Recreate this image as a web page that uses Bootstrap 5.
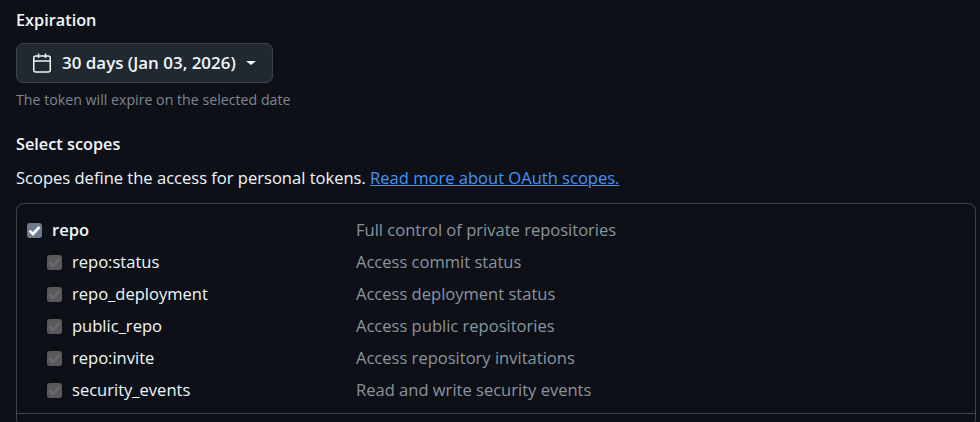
<!DOCTYPE html>
<html lang="en" data-bs-theme="dark">
<head>
<meta charset="utf-8">
<title>Expiration and scopes</title>
<link rel="stylesheet" href="https://cdn.jsdelivr.net/npm/bootstrap@5.3.0/dist/css/bootstrap.min.css">
<style>
html, body { height: 422px; overflow: hidden; }
body { background: #0d1117; color: #f0f6fc; font-family: "Open Sans", "Noto Sans", sans-serif; font-size: 16.55px; line-height: 24px; }
.page-wrap { padding: 8px 4px 0 16px; }
.field-title { font-weight: 600; font-size: 16.3px; line-height: 24px; margin: 0; color: #f0f6fc; }
.expire-btn { height: 40px; margin-top: 11px; padding: 0 16px; background: #212830; border: 1px solid #3d444d; border-radius: 7px; color: #f0f6fc; font-weight: 600; font-size: 16.95px; line-height: 24px; }
.expire-btn:hover, .expire-btn:focus { background: #212830; color: #f0f6fc; border-color: #3d444d; }
.btn-glyph { margin-right: 11px; flex: none; }
.caret-mark { display: inline-block; width: 0; height: 0; margin-left: 10px; border-top: 4px solid #f0f6fc; border-left: 5px solid transparent; border-right: 5px solid transparent; }
.hint-text { font-size: 14.2px; line-height: 20px; color: #7d8590; margin-top: 7px; }
.scope-head { margin-top: 22px; }
.scope-intro { margin: 10px 0 0; line-height: 24px; color: #f0f6fc; }
.scope-intro a { color: #4493f8; }
.scope-box { margin-top: 13px; border: 1px solid #3d444d; border-radius: 8px; padding: 10px 0 0; height: 224px; }
.scope-row { height: 32px; padding-left: 10px; }
.scope-row.sub-row { padding-left: 30px; }
.scope-name { width: 304px; flex: none; }
.scope-row.sub-row .scope-name { width: 284px; }
.scope-desc { color: #8b949e; }
.scope-check[type=checkbox].form-check-input { width: 15px; height: 15px; margin: 0 10px 0 0; flex: none; border-radius: 3px; border: 0; opacity: 1; background-size: 15px 15px; }
.scope-check[type=checkbox].form-check-input:checked { background-color: #6e7b8f; --bs-form-check-bg-image: url("data:image/svg+xml,%3csvg xmlns='http://www.w3.org/2000/svg' viewBox='0 0 15 15'%3e%3cpath fill='none' stroke='%23fff' stroke-width='2.6' d='M2.6 7.6l3.4 3.4 6.4-7'/%3e%3c/svg%3e"); }
.scope-check[type=checkbox].form-check-input:disabled { background-color: #5a5a5a; opacity: 1; --bs-form-check-bg-image: url("data:image/svg+xml,%3csvg xmlns='http://www.w3.org/2000/svg' viewBox='0 0 15 15'%3e%3cpath fill='none' stroke='%236c6c6c' stroke-width='2.4' d='M2.6 7.6l3.4 3.4 6.4-7'/%3e%3c/svg%3e"); }
.scope-rule { border-top: 1px solid #3d444d; margin-top: 7px; }
</style>
</head>
<body>
<div class="page-wrap">
  <p class="field-title">Expiration</p>
  <button type="button" class="btn expire-btn d-inline-flex align-items-center">
    <svg class="btn-glyph" width="18" height="20" viewBox="0 0 18 20" fill="none" stroke="#f0f6fc" stroke-width="1.5" aria-hidden="true"><rect x=".75" y="3" width="16.5" height="16" rx="2"/><path d="M.75 8h16.5M5.5 .5v4.5M12.5 .5v4.5"/></svg>
    <span>30 days (Jan 03, 2026)</span>
    <span class="caret-mark"></span>
  </button>
  <div class="hint-text">The token will expire on the selected date</div>

  <p class="field-title scope-head">Select scopes</p>
  <p class="scope-intro">Scopes define the access for personal tokens. <a href="#">Read more about OAuth scopes.</a></p>

  <div class="scope-box">
    <div class="scope-row d-flex align-items-center">
      <input class="form-check-input scope-check" type="checkbox" checked aria-label="repo">
      <span class="scope-name fw-semibold">repo</span>
      <span class="scope-desc">Full control of private repositories</span>
    </div>
    <div class="scope-row sub-row d-flex align-items-center">
      <input class="form-check-input scope-check" type="checkbox" checked disabled aria-label="repo:status">
      <span class="scope-name">repo:status</span>
      <span class="scope-desc">Access commit status</span>
    </div>
    <div class="scope-row sub-row d-flex align-items-center">
      <input class="form-check-input scope-check" type="checkbox" checked disabled aria-label="repo_deployment">
      <span class="scope-name">repo_deployment</span>
      <span class="scope-desc">Access deployment status</span>
    </div>
    <div class="scope-row sub-row d-flex align-items-center">
      <input class="form-check-input scope-check" type="checkbox" checked disabled aria-label="public_repo">
      <span class="scope-name">public_repo</span>
      <span class="scope-desc">Access public repositories</span>
    </div>
    <div class="scope-row sub-row d-flex align-items-center">
      <input class="form-check-input scope-check" type="checkbox" checked disabled aria-label="repo:invite">
      <span class="scope-name">repo:invite</span>
      <span class="scope-desc">Access repository invitations</span>
    </div>
    <div class="scope-row sub-row d-flex align-items-center">
      <input class="form-check-input scope-check" type="checkbox" checked disabled aria-label="security_events">
      <span class="scope-name">security_events</span>
      <span class="scope-desc">Read and write security events</span>
    </div>
    <div class="scope-rule"></div>
  </div>
</div>
</body>
</html>
